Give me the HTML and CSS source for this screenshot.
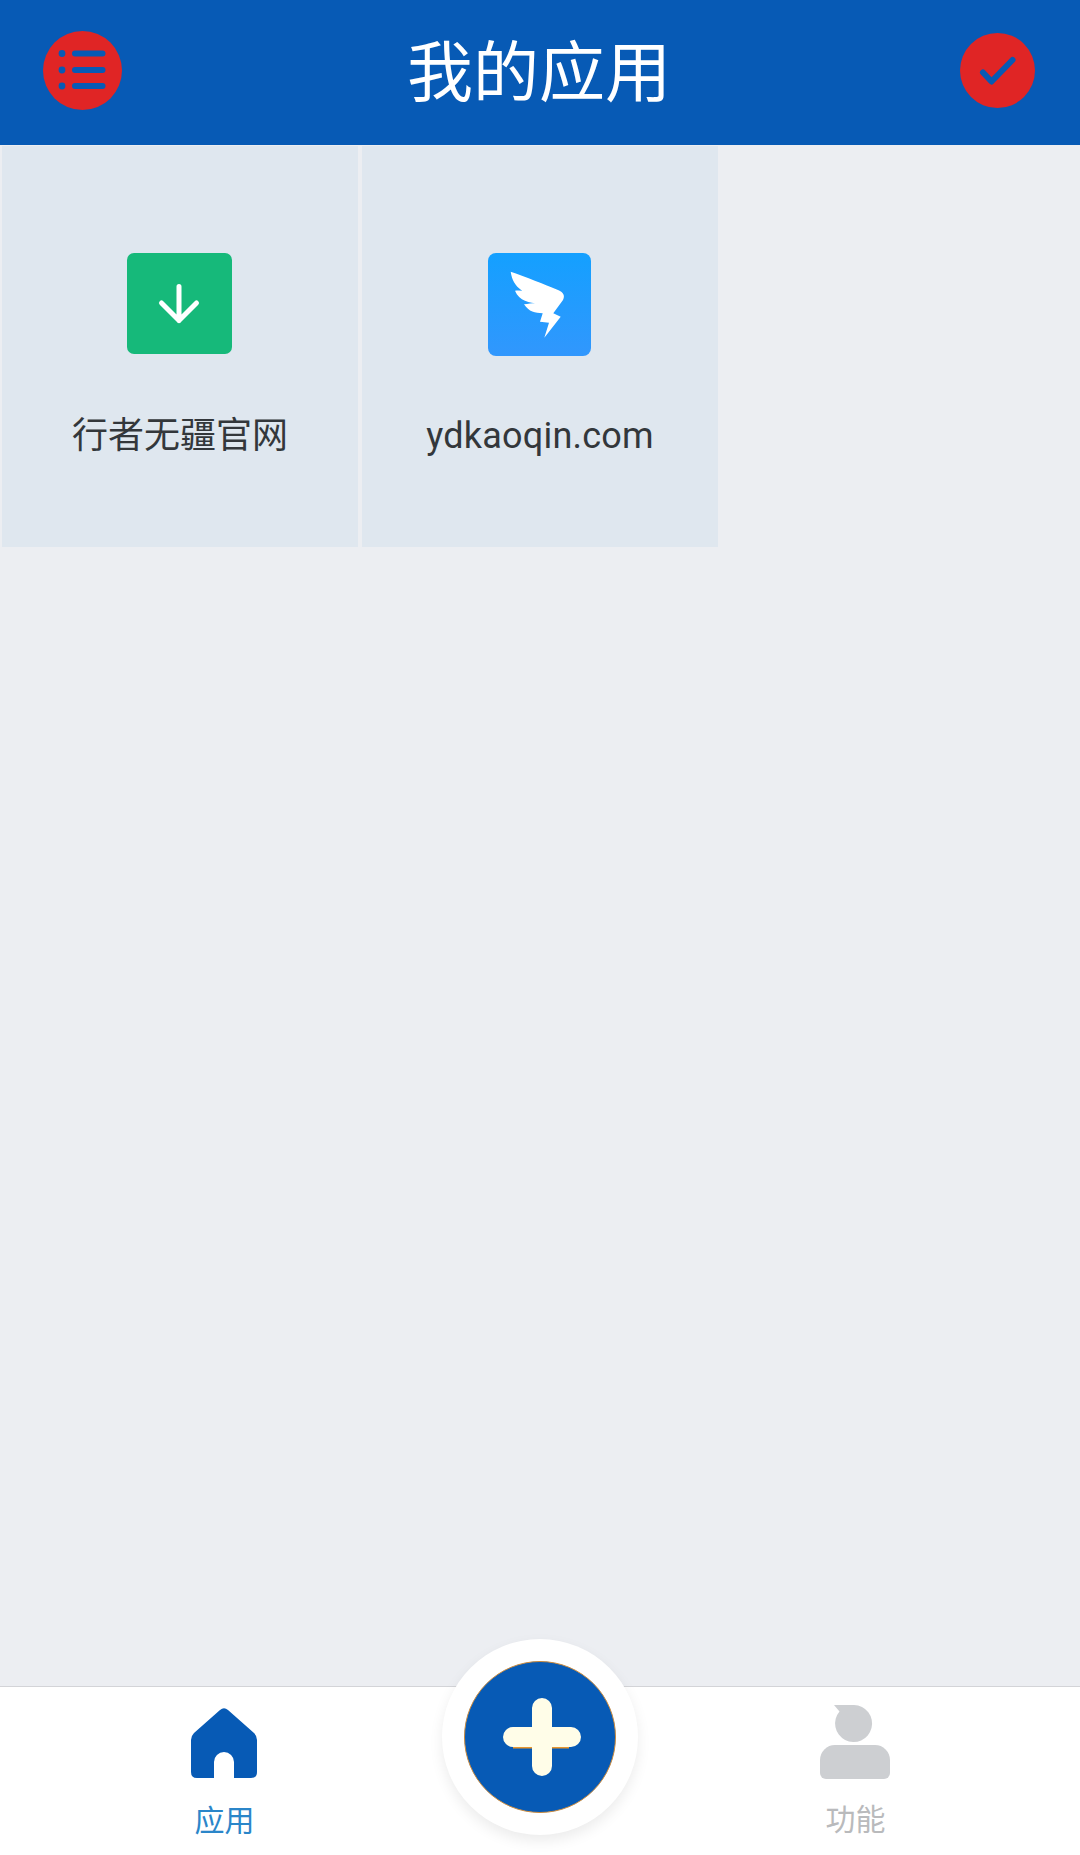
FILE: index.html
```html
<!DOCTYPE html>
<html>
<head>
    <meta charset="utf-8">
    <title>我的应用</title>
    <link rel="stylesheet" href="styles.css">
</head>
<body>
    <div class="app">
        <header class="topbar">
            <div class="topbar-left">
                <svg class="btn-list" viewBox="0 0 79 79">
                    <circle cx="39.5" cy="39.5" r="39.5" fill="#e02525"/>
                    <circle cx="19" cy="22.5" r="3.4" fill="#075ab5"/>
                    <circle cx="19" cy="39" r="3.4" fill="#075ab5"/>
                    <circle cx="19" cy="55" r="3.4" fill="#075ab5"/>
                    <rect x="29" y="19.5" width="33.5" height="6" rx="3" fill="#075ab5"/>
                    <rect x="29" y="36" width="33.5" height="6" rx="3" fill="#075ab5"/>
                    <rect x="29" y="52" width="33.5" height="6" rx="3" fill="#075ab5"/>
                </svg>
            </div>
            <h1 class="title">我的应用</h1>
            <div class="topbar-right">
                <svg class="btn-check" viewBox="0 0 75 75">
                    <circle cx="37.5" cy="37.5" r="37.5" fill="#e02525"/>
                    <path d="M23 39.5 L31.5 48.5 L52.5 27" fill="none" stroke="#075ab5" stroke-width="6" stroke-linecap="round" stroke-linejoin="round"/>
                </svg>
            </div>
        </header>

        <main class="grid">
            <div class="tile">
                <div class="tile-icon">
                    <svg class="icon-green" viewBox="0 0 105 101">
                        <rect width="105" height="101" rx="7" fill="#16b97a"/>
                        <path d="M52 33.5 V67.5 M34.5 50 L52 67.5 L69.5 50" fill="none" stroke="#fff" stroke-width="5" stroke-linecap="round" stroke-linejoin="round"/>
                    </svg>
                </div>
                <div class="tile-label">行者无疆官网</div>
            </div>
            <div class="tile">
                <div class="tile-icon">
                    <svg class="icon-ding" viewBox="0 0 103 103">
                        <defs>
                            <linearGradient id="dingBg" x1="0" y1="0" x2="0" y2="1">
                                <stop offset="0" stop-color="#14a0ff"/>
                                <stop offset="1" stop-color="#3197fd"/>
                            </linearGradient>
                        </defs>
                        <rect width="103" height="103" rx="8" fill="url(#dingBg)"/>
                        <path d="M22.7 18.7 C38 24 56 31 70 37 C76 39.5 77 43 75 47 L65.3 60.3 L72.7 63.7 L56.3 84.7 L61 69.7 L52 68.7 L54.7 60.3 C47 60 41 59 36 51.3 C41 50.5 46 50 50.3 50.3 C42 50 31 48 27 37.7 C35 37 42 39 48.7 42 C38 41 25 36 22.7 18.7 Z" fill="#fff"/>
                    </svg>
                </div>
                <div class="tile-label tile-label-latin">ydkaoqin.com</div>
            </div>
        </main>

        <nav class="tabbar">
            <div class="tab tab-active">
                <svg class="tab-icon" viewBox="0 0 70 72">
                    <path d="M31 3 Q35 -0.5 39 3 L65 26 Q68 29 68 33 V65 Q68 71 62 71 H45 V55 A10 10 0 0 0 25 55 V71 H8 Q2 71 2 65 V33 Q2 29 5 26 Z" fill="#075ab5"/>
                </svg>
                <span class="tab-label">应用</span>
            </div>
            <div></div>
            <div class="tab">
                <svg class="tab-icon" viewBox="0 0 70 76">
                    <path d="M14 1 H34 A18.500 18.500 0 1 1 19.500 7.500 Z" fill="#cdcfd2"/>
                    <path d="M15 41 H55 A15 15 0 0 1 70 56 V69 A6 6 0 0 1 64 75 H6 A6 6 0 0 1 0 69 V56 A15 15 0 0 1 15 41 Z" fill="#cdcfd2"/>
                </svg>
                <span class="tab-label">功能</span>
            </div>
            <div class="fab">
                <div class="fab-inner">
                    <svg class="fab-plus" viewBox="0 0 78 78">
                        <path d="M10 49.5 H66" stroke="#e8962e" stroke-width="2"/>
                        <path d="M39 10 V68 M10 39 H68" stroke="#fffde8" stroke-width="20" stroke-linecap="round"/>
                    </svg>
                </div>
            </div>
        </nav>
    </div>
</body>
</html>
```

FILE: styles.css
```css
html, body {
    margin: 0;
    padding: 0;
}
body {
    font-family: Roboto, "Noto Sans CJK SC", sans-serif;
    background-color: #eceef2;
}
.app {
    display: flex;
    flex-direction: column;
    height: 1855px;
    overflow: hidden;
}

/* top bar */
.topbar {
    display: grid;
    grid-template-columns: 1fr auto 1fr;
    align-items: center;
    flex: 0 0 145px;
    padding: 0 45px 5px 43px;
    box-sizing: border-box;
    background-color: #075ab5;
}
.topbar-left, .topbar-right {
    display: flex;
}
.topbar-right {
    justify-content: flex-end;
}
.btn-list {
    width: 79px;
    height: 79px;
}
.btn-check {
    width: 75px;
    height: 75px;
}
.title {
    margin: 8px 0 0;
    font-size: 66px;
    font-weight: 400;
    line-height: 80px;
    color: #fff;
}

/* app tiles */
.grid {
    display: grid;
    grid-template-columns: repeat(3, 356px);
    grid-auto-rows: 401px;
    column-gap: 4px;
    align-content: start;
    flex: 1;
    padding: 1px 0 0 2px;
}
.tile {
    display: flex;
    flex-direction: column;
    align-items: center;
    background-color: #dfe7ef;
}
.tile-icon {
    display: flex;
    align-items: flex-start;
    height: 103px;
    margin: 107px 1px 0 0;
}
.icon-green {
    width: 105px;
    height: 101px;
}
.icon-ding {
    width: 103px;
    height: 103px;
}
.tile-label {
    margin-top: 55px;
    font-size: 36px;
    line-height: 50px;
    color: #33373b;
}
.tile-label-latin {
    letter-spacing: 0.2px;
}

/* bottom tabs */
.tabbar {
    position: relative;
    display: grid;
    grid-template-columns: 449px 1fr 449px;
    flex: 0 0 169px;
    box-sizing: border-box;
    border-top: 1px solid #d3d4d8;
    background-color: #fff;
}
.tab {
    display: flex;
    flex-direction: column;
    align-items: center;
    padding-top: 17px;
}
.tab-icon {
    width: 70px;
    height: 76px;
    margin-right: 2px;
}
.tab-active .tab-icon {
    height: 72px;
    margin: 3px 1px 2px 0;
}
.tab-label {
    margin-top: 20px;
    font-size: 30px;
    line-height: 40px;
    color: #b9babc;
}
.tab-active .tab-label {
    color: #2b86c9;
}
.fab {
    position: absolute;
    left: 442px;
    top: -48px;
    display: flex;
    align-items: center;
    justify-content: center;
    width: 196px;
    height: 196px;
    border-radius: 50%;
    background-color: #fff;
    box-shadow: 0 6px 14px rgba(0, 0, 0, 0.08);
}
.fab-inner {
    display: flex;
    align-items: center;
    justify-content: center;
    width: 152px;
    height: 152px;
    box-sizing: border-box;
    border: 1px solid #c98a3e;
    border-radius: 50%;
    background-color: #075ab5;
}
.fab-plus {
    width: 78px;
    height: 78px;
    margin-left: 3px;
}
```
